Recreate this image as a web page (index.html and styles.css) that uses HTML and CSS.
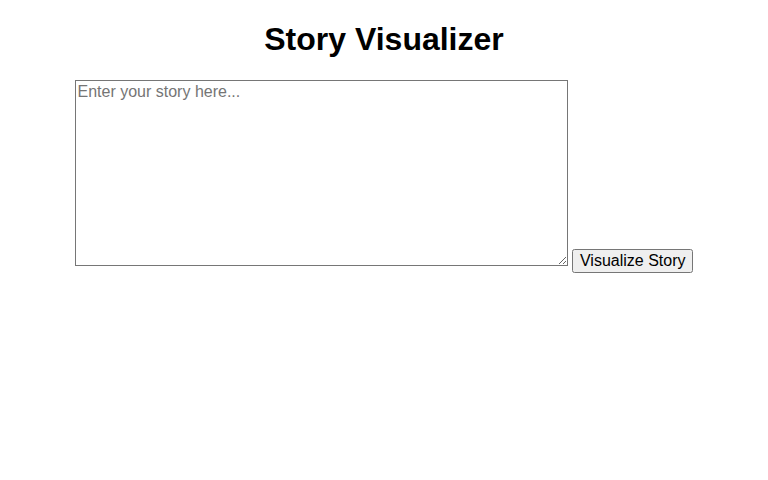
FILE: index.html
```html
<!DOCTYPE html>
<html>
<head>
<meta charset="utf-8">
<link rel="stylesheet" href="styles.css">
</head>
<body>
<div class="app">
<h1 class="title">Story Visualizer</h1>
<textarea class="story" rows="10" placeholder="Enter your story here..."></textarea>
<button class="go">Visualize Story</button>
</div>
</body>
</html>
```
FILE: styles.css
```css
body {
  margin: 8px;
  font-family: "Liberation Sans", Arial, sans-serif;
  background: #fff;
}
.app {
  text-align: center;
}
.title {
  font-size: 32px;
  font-weight: bold;
  margin: 13.44px 0 21.44px;
}
.story {
  box-sizing: border-box;
  width: 493px;
  height: 186px;
  font-family: "Liberation Sans", Arial, sans-serif;
  font-size: 16px;
  padding: 2px;
  border: 1px solid #767676;
}
.go {
  font-family: "Liberation Sans", Arial, sans-serif;
  font-size: 16px;
}
```
